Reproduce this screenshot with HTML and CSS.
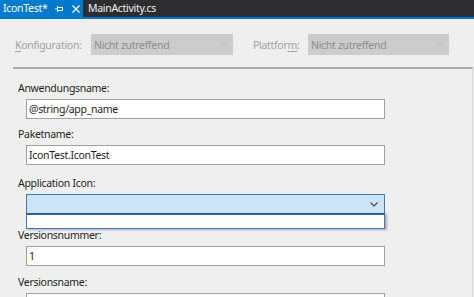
FILE: index.html
```html
<!DOCTYPE html>
<html>
<head>
<meta charset="utf-8">
<link rel="stylesheet" href="styles.css">
</head>
<body>
<div class="tabs">
  <div class="tab active">
    <span class="tab-title">IconTest*</span>
    <svg class="pin" width="8" height="8" viewBox="0 0 8 8"><path d="M0 4h2M2.5 1v6M2.5 2.5h5v3h-5" fill="none" stroke="#fff" stroke-width="1"/></svg>
    <svg class="close" width="8" height="8" viewBox="0 0 8 8"><path d="M0.5 0.5l7 7M7.5 0.5l-7 7" stroke="#fff" stroke-width="1.3"/></svg>
  </div>
  <div class="tab">MainActivity.cs</div>
</div>
<div class="tabline"></div>
<div class="config">
  <span class="clabel clabel-conf"><u>K</u>onfiguration:</span>
  <div class="cselect cselect-conf"><span>Nicht zutreffend</span><svg width="8" height="5" viewBox="0 0 8 5"><path d="M0.5 0.5l3.5 3.5 3.5-3.5" fill="none" stroke="#b5b5b5" stroke-width="1"/></svg></div>
  <span class="clabel clabel-plat">Plattfor<u>m</u>:</span>
  <div class="cselect cselect-plat"><span>Nicht zutreffend</span><svg width="8" height="5" viewBox="0 0 8 5"><path d="M0.5 0.5l3.5 3.5 3.5-3.5" fill="none" stroke="#b5b5b5" stroke-width="1"/></svg></div>
</div>
<div class="content">
  <div class="group g1">
    <div class="label">Anwendungsname:</div>
    <div class="input">@string/app_name</div>
  </div>
  <div class="group g2">
    <div class="label">Paketname:</div>
    <div class="input">IconTest.IconTest</div>
  </div>
  <div class="group g3">
    <div class="label">Application Icon:</div>
    <div class="combo-wrap">
      <div class="combo"><svg width="8" height="5" viewBox="0 0 8 5"><path d="M0.5 0.5l3.5 3.5 3.5-3.5" fill="none" stroke="#4a4a4a" stroke-width="1.2"/></svg></div>
      <div class="combo-list"></div>
    </div>
  </div>
  <div class="group g4">
    <div class="label">Versionsnummer:</div>
    <div class="input">1</div>
  </div>
  <div class="group g5">
    <div class="label">Versionsname:</div>
    <div class="input"></div>
  </div>
</div>
</body>
</html>
```
FILE: styles.css
```css
html, body {
  margin: 0;
  padding: 0;
}
body {
  width: 474px;
  height: 297px;
  overflow: hidden;
  background: #efefef;
  font-family: "Noto Sans", "Open Sans", sans-serif;
  font-size: 10.5px;
  letter-spacing: -0.3px;
  color: #1e1e1e;
}
.tabs {
  height: 17px;
  background: #2d2d30;
  display: flex;
  align-items: stretch;
}
.tab {
  color: #f1f1f1;
  line-height: 17px;
  padding-left: 5px;
  font-size: 10.5px;
}
.tab.active {
  background: #007acc;
  color: #fff;
  width: 83px;
  box-sizing: border-box;
  padding: 0 3px 0 3px;
  display: flex;
  align-items: center;
}
.tab-title {
  line-height: 17px;
}
.pin {
  margin-left: auto;
}
.close {
  margin-left: 9px;
}
.tabline {
  height: 2px;
  background: #007acc;
}
.config {
  display: flex;
  align-items: center;
  padding: 15px 0 0 15px;
  height: 21px;
}
.clabel {
  color: #a2a2a2;
}
.clabel u {
  text-decoration-thickness: 1px;
  text-underline-offset: 2px;
}
.clabel-conf {
  width: 76px;
}
.clabel-plat {
  width: 55px;
  margin-left: 20px;
}
.cselect {
  height: 21px;
  box-sizing: border-box;
  background: #cccccc;
  color: #8c8c8c;
  display: flex;
  align-items: center;
  justify-content: space-between;
  padding: 0 5px 0 3px;
}
.cselect-conf {
  width: 142px;
}
.cselect-plat {
  width: 141px;
}
.content {
  margin: 12px 0 0 13px;
  border-top: 2px solid #a8a8a8;
  border-right: 1px solid #dadada;
  width: 460px;
  height: 230px;
  overflow: hidden;
  padding-left: 5px;
  box-sizing: border-box;
}
.g1 { margin-top: 11px; }
.g2 { margin-top: 7px; }
.g3 { margin-top: 10px; }
.g4 { margin-top: 13px; }
.g5 { margin-top: 8px; }
.label {
  height: 16px;
  line-height: 16px;
  margin-bottom: 3px;
}
.input {
  margin-left: 8px;
  width: 359px;
  height: 20px;
  box-sizing: border-box;
  border: 1px solid #a0a0a0;
  background: #fff;
  line-height: 18px;
  padding-left: 2px;
}
.combo-wrap {
  position: relative;
  margin-left: 8px;
  width: 359px;
  height: 20px;
}
.combo {
  height: 20px;
  box-sizing: border-box;
  border: 1px solid #3b78b4;
  background: #cce4f7;
  display: flex;
  align-items: center;
  justify-content: flex-end;
  padding-right: 6px;
}
.combo-list {
  position: absolute;
  left: 0;
  top: 19px;
  width: 359px;
  height: 16px;
  box-sizing: border-box;
  border: 1px solid #3b78b4;
  border-top: 2px solid #2c5f94;
  background: #fff;
  box-shadow: 2px 1px 2px rgba(0, 0, 0, 0.28);
}
```
